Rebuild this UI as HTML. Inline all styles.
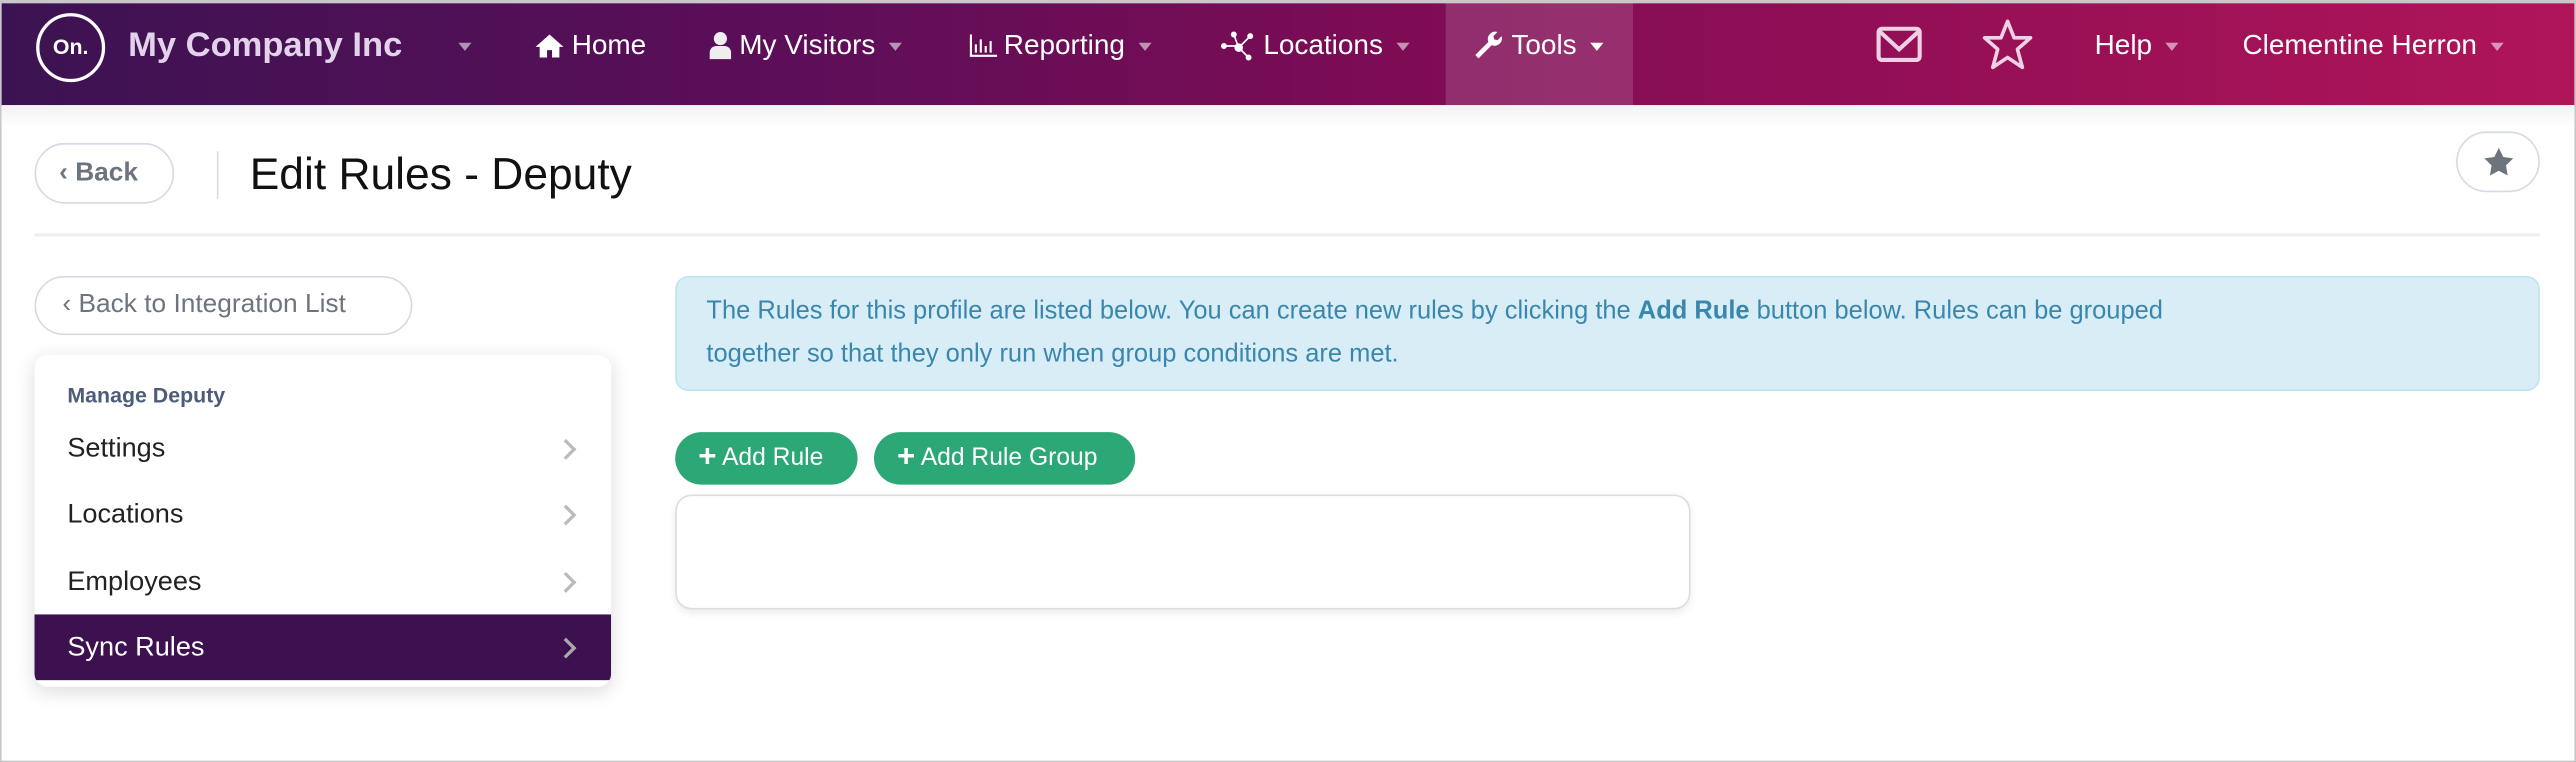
<!DOCTYPE html>
<html><head><meta charset="utf-8"><style>
html,body{margin:0;padding:0;width:2576px;height:760px;overflow:hidden;background:#fff}
#s{position:absolute;left:0;top:0;width:1568px;height:463px;transform:scale(1.642857);transform-origin:0 0;font-family:"Liberation Sans",sans-serif;}
.a{position:absolute;white-space:nowrap}
.frame{position:absolute;left:0;top:0;width:1566px;height:461px;border:1px solid #c8c8c8;border-top:2px solid #c8c8c8}
.nav{position:absolute;left:1px;top:2px;width:1566px;height:62px;background:linear-gradient(90deg,#3c1352 0%,#5c0e58 30%,#7e0c55 55%,#9a1056 80%,#b0155a 100%)}
.nt{color:#fff;font-size:17px;top:0;height:52px;display:flex;align-items:center}
.nt svg{margin-right:4px}
.car{display:inline-block;width:0;height:0;border-left:4px solid transparent;border-right:4px solid transparent;border-top:5px solid rgba(255,255,255,.55);margin-left:8px}
.pill{position:absolute;border:1.5px solid #d5dae6;border-radius:20px;box-sizing:border-box;color:#6c757d}
.item{position:absolute;left:0;width:351px;height:40px;font-size:16.5px;color:#222;line-height:40px;padding-left:20px;box-sizing:border-box}
.chev{position:absolute;right:23px;top:16px;width:7px;height:7px;border-right:2px solid #bbb;border-top:2px solid #bbb;transform:rotate(45deg)}
.btn{position:absolute;top:263px;height:32px;background:#2ba876;border-radius:16px;color:#fff;font-size:15px;line-height:31px;box-sizing:border-box;padding-left:14px}
</style></head><body><div id="s">
<div class="frame"></div>
<div class="nav">
 <div class="a" style="left:21px;top:6px;width:38px;height:38px;border:2px solid #fff;border-radius:50%;color:#fff;font-weight:bold;font-size:13px;text-align:center;line-height:38px">On.</div>
 <div class="a nt" style="left:77px;color:#e2d2ea;font-size:21px;font-weight:bold">My Company Inc</div>
 <div class="a nt" style="left:270px"><span class="car"></span></div>
 <div class="a nt" style="left:324px"><svg width="19" height="16" viewBox="0 0 19 16"><path d="M9.5 1L1 8.5h2.5V15h4.5v-4.5h3V15h4.5V8.5H18z" fill="#fff"/></svg>Home</div>
 <div class="a nt" style="left:430px"><svg width="15" height="18" viewBox="0 0 15 18"><circle cx="7.5" cy="4.5" r="4" fill="#eee"/><path d="M1 17v-4c0-2.5 2-4 4-4h5c2 0 4 1.5 4 4v4z" fill="#eee"/></svg>My Visitors<span class="car"></span></div>
 <div class="a nt" style="left:589px"><svg width="17" height="14" viewBox="0 0 17 14"><path d="M1 0v13h16" stroke="#fff" stroke-width="1.3" fill="none"/><path d="M4 11V6M7 11V3M10 11V7M13 11V4" stroke="#fff" stroke-width="1.3"/></svg>Reporting<span class="car"></span></div>
 <div class="a nt" style="left:742px"><svg width="22" height="18" viewBox="0 0 22 18"><g fill="#fff"><circle cx="2" cy="9" r="1.8"/><circle cx="11" cy="10" r="2.6"/><circle cx="8" cy="2" r="1.8"/><circle cx="18" cy="3" r="1.8"/><circle cx="17" cy="16" r="1.8"/></g><path d="M2 9h9M11 10L8 2M11 10l7-7M11 10l6 6" stroke="#fff" stroke-width="1"/></svg>Locations<span class="car"></span></div>
 <div class="a" style="left:879px;top:0;width:114px;height:62px;background:rgba(255,255,255,.14)"></div>
 <div class="a nt" style="left:897px"><svg width="18" height="18" viewBox="0 0 18 18"><path d="M2 16.5l8-8a4.5 4.5 0 0 0 6-5.5l-2.5 2.5-2-.5-.5-2L13.5.5A4.5 4.5 0 0 0 8 6.5l-8 8z" fill="#fff"/></svg>Tools<span class="car" style="border-top-color:#fff"></span></div>
 <svg class="a" style="left:1141px;top:14px" width="28" height="22" viewBox="0 0 28 22"><rect x="1.5" y="1.5" width="25" height="19" rx="2" fill="none" stroke="#f0d0e4" stroke-width="2.5"/><path d="M2 3l12 11L26 3" fill="none" stroke="#f0d0e4" stroke-width="2.5"/></svg>
 <svg class="a" style="left:1205px;top:9px" width="32" height="32" viewBox="0 0 32 32"><path d="M16 2l4 10h10l-8 7 3 11-9-6-9 6 3-11-8-7h10z" fill="none" stroke="#f0d0e4" stroke-width="2.2" stroke-linejoin="round"/></svg>
 <div class="a nt" style="left:1274px">Help<span class="car"></span></div>
 <div class="a nt" style="left:1364px">Clementine Herron<span class="car"></span></div>
</div>
<div class="a" style="left:1px;top:64px;width:1566px;height:14px;background:linear-gradient(#f2f2f2,#fff)"></div>
<div class="pill" style="left:21px;top:87px;width:85px;height:37px;font-weight:bold;font-size:16px;line-height:36px;padding-left:14px">&#8249; Back</div>
<div class="a" style="left:132px;top:92px;width:1px;height:29px;background:#ddd"></div>
<div class="a" style="left:152px;top:91px;font-size:27px;color:#111">Edit Rules - Deputy</div>
<div class="pill" style="left:1495px;top:80px;width:51px;height:37px"><svg style="position:absolute;left:16px;top:9px" width="18" height="17" viewBox="0 0 18 17"><path d="M9 0l2.7 5.6 6.1.8-4.4 4.3 1 6.1L9 13.9 3.6 16.8l1-6.1L.2 6.4l6.1-.8z" fill="#6c757d"/></svg></div>
<div class="a" style="left:21px;top:142px;width:1525px;height:2px;background:#eee"></div>
<div class="pill" style="left:21px;top:168px;width:230px;height:36px;font-size:16px;line-height:34px;padding-left:16px">&#8249; Back to Integration List</div>
<div class="a" style="left:21px;top:216px;width:351px;height:202px;border-radius:8px;background:#fff;box-shadow:0 3px 12px rgba(0,0,0,.14);overflow:hidden">
 <div class="a" style="left:20px;top:17px;font-size:13px;font-weight:bold;color:#4d5c78">Manage Deputy</div>
 <div class="item" style="top:37px">Settings<div class="chev"></div></div>
 <div class="item" style="top:77px">Locations<div class="chev"></div></div>
 <div class="item" style="top:118px">Employees<div class="chev"></div></div>
 <div class="item" style="top:158px;background:#3d1050;color:#fff">Sync Rules<div class="chev" style="border-color:#aaa"></div></div>
</div>
<div class="a" style="left:411px;top:168px;width:1135px;height:70px;box-sizing:border-box;background:#d9edf7;border:1px solid #bce5ef;border-radius:8px;color:#3a87ad;font-size:15.5px;line-height:26px;padding:8px 0 0 18px;white-space:normal">The Rules for this profile are listed below. You can create new rules by clicking the <b>Add Rule</b> button below. Rules can be grouped<br>together so that they only run when group conditions are met.</div>
<div class="btn" style="left:411px;width:111px"><b style="font-size:19px;vertical-align:-1px">+</b> Add Rule</div>
<div class="btn" style="left:532px;width:159px"><b style="font-size:19px;vertical-align:-1px">+</b> Add Rule Group</div>
<div class="a" style="left:411px;top:301px;width:618px;height:70px;box-sizing:border-box;border:1px solid #ddd;border-radius:10px;box-shadow:0 2px 5px rgba(0,0,0,.08)"></div>
</div></body></html>
